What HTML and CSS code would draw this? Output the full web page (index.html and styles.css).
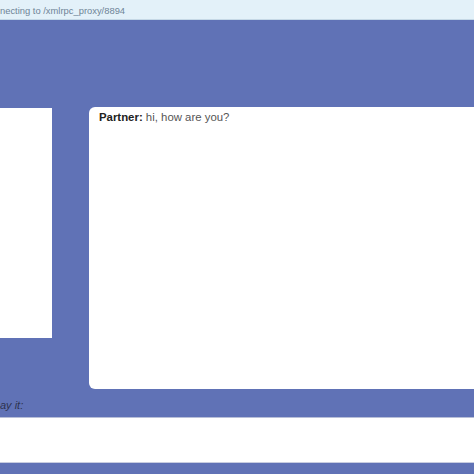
FILE: index.html
```html
<!DOCTYPE html>
<html>
<head>
<meta charset="utf-8">
<link rel="stylesheet" href="styles.css">
</head>
<body>
<div class="status">necting to /xmlrpc_proxy/8894</div>
<div class="main">
  <div class="panels">
    <div class="left-panel"></div>
    <div class="chat">
      <div class="msg"><b>Partner:</b> hi, how are you?</div>
    </div>
  </div>
  <div class="label">ay it:</div>
  <div class="input"></div>
</div>
</body>
</html>
```
FILE: styles.css
```css
html, body {
  margin: 0;
  padding: 0;
  width: 474px;
  height: 474px;
  overflow: hidden;
  background: #6072b6;
  font-family: "Liberation Sans", Arial, sans-serif;
}
.status {
  height: 19px;
  line-height: 22px;
  background: #e3f1f9;
  border-bottom: 1px solid #c5d8e6;
  color: #6f8497;
  font-size: 9.4px;
  white-space: nowrap;
  overflow: hidden;
}
.main {
  display: flex;
  flex-direction: column;
  padding-top: 87px;
}
.panels {
  display: flex;
  align-items: flex-start;
  gap: 37px;
  overflow: hidden;
}
.left-panel {
  flex: 0 0 52px;
  height: 230px;
  margin-top: 1px;
  background: #fff;
}
.chat {
  flex: 0 0 385px;
  height: 282px;
  background: #fff;
  border-radius: 6px 0 0 6px;
  box-sizing: border-box;
  padding: 4px 10px;
  font-size: 11.4px;
  color: #555;
}
.msg b {
  color: #222;
}
.label {
  margin-top: 9px;
  height: 19px;
  line-height: 14px;
  font-size: 11px;
  color: #2e3350;
  font-style: italic;
}
.input {
  height: 44px;
  background: #fff;
  border-top: 1px solid #b8bfd8;
  border-bottom: 1px solid #c8cde0;
}
```
